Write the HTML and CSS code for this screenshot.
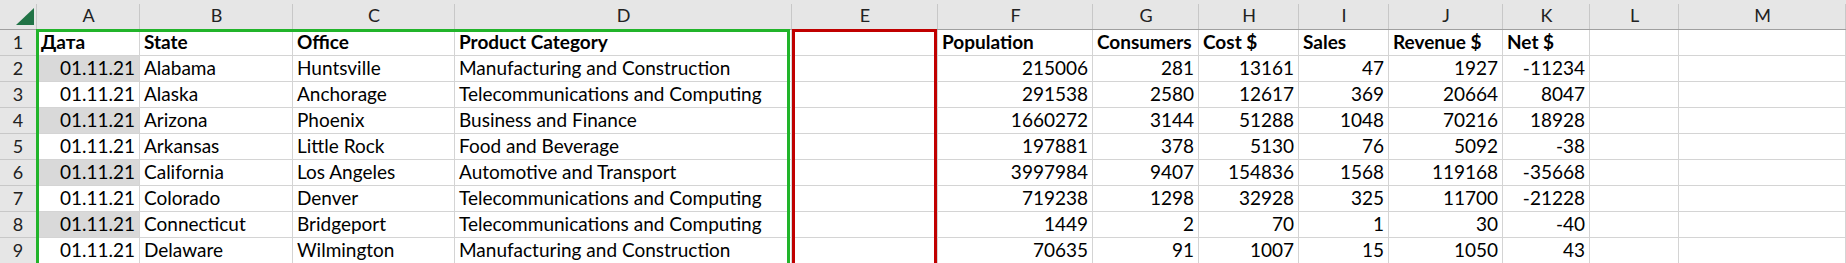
FILE: index.html
```html
<!DOCTYPE html>
<html lang="en">
<head>
  <meta charset="UTF-8">
  <title>Sheet1</title>
  <link rel="stylesheet" href="styles.css">
</head>
<body>
  <div class="sheet-wrap">
    <div class="sheet">
      <!-- column headers -->
      <div class="hd corner"><svg width="36" height="29" viewBox="0 0 36 29"><polygon points="15,25 33,8 33,25" fill="#217346"/></svg></div>
      <div class="hd">A</div><div class="hd">B</div><div class="hd">C</div><div class="hd">D</div>
      <div class="hd">E</div><div class="hd">F</div><div class="hd">G</div><div class="hd">H</div>
      <div class="hd">I</div><div class="hd">J</div><div class="hd">K</div><div class="hd">L</div><div class="hd">M</div>

      <!-- row 1 -->
      <div class="rh">1</div>
      <div class="c b">Дата</div><div class="c b">State</div><div class="c b">Office</div><div class="c b">Product Category</div>
      <div class="c"></div>
      <div class="c b">Population</div><div class="c b">Consumers</div><div class="c b">Cost $</div><div class="c b">Sales</div>
      <div class="c b">Revenue $</div><div class="c b">Net $</div><div class="c"></div><div class="c"></div>

      <div class="rh">2</div>
      <div class="c num shade">01.11.21</div><div class="c">Alabama</div><div class="c">Huntsville</div><div class="c">Manufacturing and Construction</div>
      <div class="c"></div>
      <div class="c num">215006</div><div class="c num">281</div><div class="c num">13161</div><div class="c num">47</div>
      <div class="c num">1927</div><div class="c num">-11234</div><div class="c"></div><div class="c"></div>

      <div class="rh">3</div>
      <div class="c num">01.11.21</div><div class="c">Alaska</div><div class="c">Anchorage</div><div class="c">Telecommunications and Computing</div>
      <div class="c"></div>
      <div class="c num">291538</div><div class="c num">2580</div><div class="c num">12617</div><div class="c num">369</div>
      <div class="c num">20664</div><div class="c num">8047</div><div class="c"></div><div class="c"></div>

      <div class="rh">4</div>
      <div class="c num shade">01.11.21</div><div class="c">Arizona</div><div class="c">Phoenix</div><div class="c">Business and Finance</div>
      <div class="c"></div>
      <div class="c num">1660272</div><div class="c num">3144</div><div class="c num">51288</div><div class="c num">1048</div>
      <div class="c num">70216</div><div class="c num">18928</div><div class="c"></div><div class="c"></div>

      <div class="rh">5</div>
      <div class="c num">01.11.21</div><div class="c">Arkansas</div><div class="c">Little Rock</div><div class="c">Food and Beverage</div>
      <div class="c"></div>
      <div class="c num">197881</div><div class="c num">378</div><div class="c num">5130</div><div class="c num">76</div>
      <div class="c num">5092</div><div class="c num">-38</div><div class="c"></div><div class="c"></div>

      <div class="rh">6</div>
      <div class="c num shade">01.11.21</div><div class="c">California</div><div class="c">Los Angeles</div><div class="c">Automotive and Transport</div>
      <div class="c"></div>
      <div class="c num">3997984</div><div class="c num">9407</div><div class="c num">154836</div><div class="c num">1568</div>
      <div class="c num">119168</div><div class="c num">-35668</div><div class="c"></div><div class="c"></div>

      <div class="rh">7</div>
      <div class="c num">01.11.21</div><div class="c">Colorado</div><div class="c">Denver</div><div class="c">Telecommunications and Computing</div>
      <div class="c"></div>
      <div class="c num">719238</div><div class="c num">1298</div><div class="c num">32928</div><div class="c num">325</div>
      <div class="c num">11700</div><div class="c num">-21228</div><div class="c"></div><div class="c"></div>

      <div class="rh">8</div>
      <div class="c num shade">01.11.21</div><div class="c">Connecticut</div><div class="c">Bridgeport</div><div class="c">Telecommunications and Computing</div>
      <div class="c"></div>
      <div class="c num">1449</div><div class="c num">2</div><div class="c num">70</div><div class="c num">1</div>
      <div class="c num">30</div><div class="c num">-40</div><div class="c"></div><div class="c"></div>

      <div class="rh">9</div>
      <div class="c num">01.11.21</div><div class="c">Delaware</div><div class="c">Wilmington</div><div class="c">Manufacturing and Construction</div>
      <div class="c"></div>
      <div class="c num">70635</div><div class="c num">91</div><div class="c num">1007</div><div class="c num">15</div>
      <div class="c num">1050</div><div class="c num">43</div><div class="c"></div><div class="c"></div>
    </div>

    <!-- selection outlines drawn over the grid -->
    <div class="sel sel-green"></div>
    <div class="sel sel-red"></div>
  </div>
</body>
</html>
```

FILE: styles.css
```css
body {
  margin: 0;
  background: #fff;
  font-family: Lato, "Liberation Sans", sans-serif;
  color: #000;
}
.sheet-wrap {
  position: relative;
  height: 263px;
  overflow: hidden;
}
.sheet {
  display: grid;
  grid-template-columns: 37px 103px 153px 162px 337px 146px 155px 106px 100px 90px 114px 87px 89px 1fr;
  grid-template-rows: 30px repeat(9, 26px);
}
.hd {
  box-sizing: border-box;
  display: flex;
  align-items: flex-end;
  justify-content: center;
  padding-bottom: 4px;
  font-size: 18px;
  line-height: 20px;
  color: #222;
  border-bottom: 1px solid #9f9f9f;
  background: linear-gradient(#c8c8c8, #c8c8c8) right bottom / 1px calc(100% - 4px) no-repeat, #e6e6e6;
}
.corner {
  padding: 0;
  align-items: stretch;
}
.rh {
  box-sizing: border-box;
  display: flex;
  align-items: flex-end;
  justify-content: center;
  padding-bottom: 3px;
  font-size: 18px;
  line-height: 20px;
  color: #222;
  background: #e6e6e6;
  border-bottom: 1px solid #c8c8c8;
  border-right: 1px solid #9f9f9f;
}
.c {
  box-sizing: border-box;
  display: flex;
  align-items: flex-end;
  padding: 0 4px 3px 4px;
  font-size: 19px;
  line-height: 20px;
  white-space: nowrap;
  border-right: 1px solid #d4d4d4;
  border-bottom: 1px solid #d4d4d4;
}
.num {
  justify-content: flex-end;
}
.b {
  font-weight: bold;
}
.shade {
  background: #d9d9d9;
}
.sel {
  position: absolute;
  top: 29px;
  height: 300px;
  box-sizing: border-box;
  border: 3px solid;
  pointer-events: none;
}
.sel-green {
  left: 36px;
  width: 754px;
  border-color: #21b42a;
}
.sel-red {
  left: 792px;
  width: 145px;
  border-color: #c00000;
}
```
